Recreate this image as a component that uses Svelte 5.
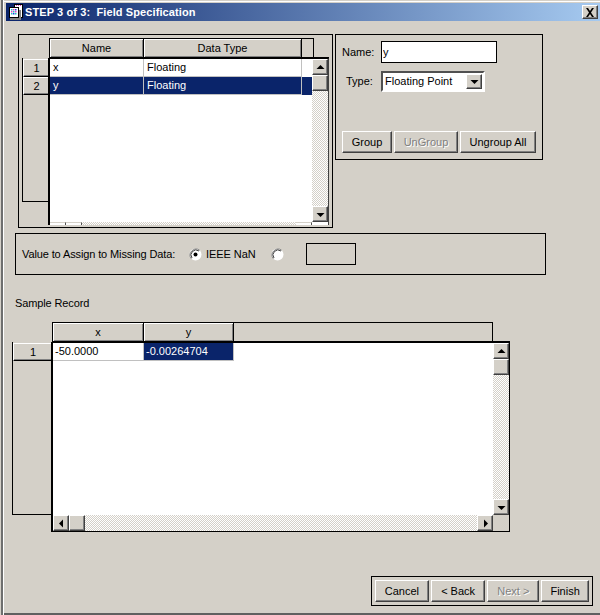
<script>
	const fields = [
		{ id: 1, name: 'x', type: 'Floating', selected: false },
		{ id: 2, name: 'y', type: 'Floating', selected: true }
	];
	const sample = [
		{ value: '-50.0000', selected: false },
		{ value: '-0.00264704', selected: true }
	];
	const iconDots = ['#20c0c0', '#e040c0', '#2040e0', '#e040c0', '#20c0c0', '#e040c0', '#20c0c0', '#2040e0', '#20c0c0'];
</script>

{#snippet arrow(dir)}
	<button class="btn sb-btn" tabindex="-1">
		<svg width="9" height="9" viewBox="0 0 9 9">
			{#if dir === 'up'}<path d="M4.5 2 L8.5 6 H0.5 Z" />{/if}
			{#if dir === 'down'}<path d="M0.5 3 H8.5 L4.5 7 Z" />{/if}
			{#if dir === 'left'}<path d="M6 0.5 V8.5 L2 4.5 Z" />{/if}
			{#if dir === 'right'}<path d="M3 0.5 V8.5 L7 4.5 Z" />{/if}
		</svg>
	</button>
{/snippet}

{#snippet radio(on)}
	<svg class="radio" width="13" height="13" viewBox="0 0 13 13">
		<circle cx="6.5" cy="6.5" r="6" fill="#fff" />
		<path d="M2.3 10.7 A6 6 0 0 1 10.7 2.3" fill="none" stroke="#808080" />
		<path d="M3 10 A5 5 0 0 1 10 3" fill="none" stroke="#404040" />
		{#if on}<circle cx="6.5" cy="6.5" r="2" fill="#000" />{/if}
	</svg>
{/snippet}

<div class="window">
	<div class="titlebar">
		<svg class="app-icon" width="16" height="16" viewBox="0 0 16 16">
			<rect x="6" y="0" width="9" height="14" fill="#000" />
			<rect x="7" y="1" width="7" height="12" fill="#fff" />
			<rect x="8" y="1" width="1" height="1" fill="#e040c0" />
			<rect x="10" y="1" width="1" height="1" fill="#e040c0" />
			<rect x="12" y="1" width="1" height="1" fill="#e040c0" />
			<rect x="2" y="6" width="11" height="10" fill="#808080" />
			<rect x="1" y="3" width="10" height="11" fill="#000" />
			<rect x="2" y="4" width="8" height="9" fill="#fff" />
			{#each iconDots as color, i}
				<rect x={3 + (i % 3) * 2} y={5 + Math.floor(i / 3) * 2} width="1.5" height="1.5" fill={color} />
			{/each}
		</svg>
		<span class="title">STEP 3 of 3:&nbsp; Field Specification</span>
		<button class="btn close" tabindex="-1">
			<svg width="10" height="9" viewBox="0 0 10 9"><path d="M1 0 H3 L5 3 L7 0 H9 L6 4.5 L9 9 H7 L5 6 L3 9 H1 L4 4.5 Z" /></svg>
		</button>
	</div>

	<div class="top-row">
		<div class="group fields-group">
			<div class="sheet sheet-a">
				<div class="colheads">
					<div class="colhead col-name">Name</div>
					<div class="colhead col-type">Data Type</div>
					<div class="colhead-end"></div>
				</div>
				<div class="rowheads">
					{#each fields as f}
						<div class="rowhead">{f.id}</div>
					{/each}
				</div>
				<div class="body">
					<div class="cells">
						{#each fields as f}
							<div class="row" class:selected={f.selected}>
								<div class="cell col-name">{f.name}</div>
								<div class="cell col-type">{f.type}</div>
							</div>
						{/each}
					</div>
					<div class="vscroll">
						{@render arrow('up')}
						<div class="btn thumb"></div>
						<div class="track"></div>
						{@render arrow('down')}
					</div>
					<div class="hsliver">
						<div class="tick"></div>
						<div class="tick"></div>
						<div class="track"></div>
						<div class="tick"></div>
					</div>
				</div>
			</div>
		</div>

		<div class="group spec-group">
			<div class="form-line name-line">
				<label for="field-name">Name:</label>
				<input id="field-name" value="y" />
			</div>
			<div class="form-line type-line">
				<span class="type-label">Type:</span>
				<div class="combo">
					<span class="combo-text">Floating Point</span>
					<button class="btn combo-btn" tabindex="-1">
						<svg width="9" height="9" viewBox="0 0 9 9"><path d="M0.5 3 H8.5 L4.5 7 Z" /></svg>
					</button>
				</div>
			</div>
			<div class="btn-row">
				<button class="btn push w-group">Group</button>
				<button class="btn push w-ungroup disabled">UnGroup</button>
				<button class="btn push w-all">Ungroup All</button>
			</div>
		</div>
	</div>

	<div class="group missing-group">
		<span class="missing-label">Value to Assign to Missing Data:</span>
		{@render radio(true)}
		<span class="nan-label">IEEE NaN</span>
		{@render radio(false)}
		<div class="missing-box"></div>
	</div>

	<div class="sample-label">Sample Record</div>

	<div class="sheet sheet-b">
		<div class="colheads">
			<div class="colhead col-x">x</div>
			<div class="colhead col-y">y</div>
			<div class="colhead-end"></div>
		</div>
		<div class="rowheads">
			<div class="rowhead">1</div>
		</div>
		<div class="body">
			<div class="cells">
				<div class="row">
					{#each sample as s, i}
						<div class="cell {i === 0 ? 'col-x' : 'col-y'}" class:selected={s.selected}>{s.value}</div>
					{/each}
				</div>
			</div>
			<div class="vscroll">
				{@render arrow('up')}
				<div class="btn thumb"></div>
				<div class="track"></div>
				{@render arrow('down')}
			</div>
			<div class="hscroll">
				{@render arrow('left')}
				<div class="btn thumb"></div>
				<div class="track"></div>
				{@render arrow('right')}
			</div>
			<div class="corner"></div>
		</div>
	</div>

	<div class="footer">
		<div class="group nav-group">
			<button class="btn push w-cancel">Cancel</button>
			<button class="btn push w-back">&lt; Back</button>
			<button class="btn push w-next disabled">Next &gt;</button>
			<button class="btn push w-finish">Finish</button>
		</div>
	</div>
</div>

<style>
	:global(body) {
		background: #d4d0c8;
	}

	.window {
		width: 600px;
		height: 615px;
		box-sizing: border-box;
		padding-top: 3px;
		overflow: hidden;
		background: #d4d0c8;
		color: #000;
		font: 11px/13px "Liberation Sans", Arial, sans-serif;
		box-shadow: inset 1px 0 #d4d0c8, inset 3px 0 #6e6e6e, inset 4px 0 #fff, inset 0 1px #d4d0c8, inset 0 2px #fff, inset 0 -2px #606060;
	}

	.titlebar {
		display: flex;
		align-items: center;
		height: 18px;
		margin-left: 6px;
		padding: 0 2px;
		background: linear-gradient(90deg, #0a246a, #a6caf0);
		color: #fff;
	}

	.app-icon {
		flex: none;
	}

	.title {
		margin-left: 1px;
		font-weight: bold;
		font-size: 11px;
		letter-spacing: 0.1px;
		white-space: nowrap;
	}

	.btn {
		box-sizing: border-box;
		display: flex;
		align-items: center;
		justify-content: center;
		padding: 0;
		background: #d4d0c8;
		border: 1px solid;
		border-color: #fff #404040 #404040 #fff;
		box-shadow: inset -1px -1px #808080;
		border-radius: 0;
		font: inherit;
		color: #000;
	}

	.close {
		width: 16px;
		height: 14px;
		margin-left: auto;
	}

	.top-row {
		display: flex;
		align-items: flex-start;
		gap: 2px;
		margin: 13px 0 0 18px;
	}

	.group {
		box-sizing: border-box;
		border: 1px solid #000;
	}

	.fields-group {
		width: 315px;
		height: 194px;
		padding: 3px 0 0 3px;
	}

	.spec-group {
		width: 208px;
		height: 126px;
		padding: 6px 0 0 6px;
	}

	.form-line {
		display: flex;
		align-items: center;
	}

	.name-line {
		height: 22px;
	}

	.name-line label {
		width: 39px;
	}

	.name-line input {
		box-sizing: border-box;
		width: 116px;
		height: 22px;
		padding: 0 1px;
		border: 1px solid #000;
		border-radius: 0;
		outline: none;
		background: #fff;
		font: inherit;
	}

	.type-line {
		height: 21px;
		margin-top: 8px;
	}

	.type-label {
		width: 35px;
		margin-left: 4px;
	}

	.combo {
		box-sizing: border-box;
		display: flex;
		align-items: center;
		justify-content: space-between;
		width: 104px;
		height: 21px;
		padding-left: 2px;
		padding-right: 1px;
		background: #fff;
		border: 2px solid;
		border-color: #505050 #fff #fff #505050;
	}

	.combo-btn {
		width: 16px;
		height: 15px;
	}

	.btn-row {
		display: flex;
		gap: 2px;
		margin-top: 39px;
	}

	.push {
		height: 22px;
		white-space: nowrap;
	}

	.w-group { width: 50px; }
	.w-ungroup { width: 64px; }
	.w-all { width: 76px; }
	.w-cancel { width: 54px; }
	.w-back { width: 55px; }
	.w-next { width: 52px; }
	.w-finish { width: 48px; }

	.disabled {
		color: #808080;
		text-shadow: 1px 1px #fff;
	}

	.missing-group {
		display: flex;
		align-items: center;
		width: 531px;
		height: 42px;
		margin: 5px 0 0 15px;
		padding-left: 6px;
	}

	.missing-label {
		width: 167px;
		letter-spacing: -0.12px;
	}

	.nan-label {
		width: 65px;
		margin-left: 4px;
		letter-spacing: -0.05px;
	}

	.radio {
		flex: none;
	}

	.missing-box {
		box-sizing: border-box;
		width: 50px;
		height: 22px;
		margin-left: 22px;
		border: 1px solid #000;
	}

	.sample-label {
		margin: 22px 0 0 15px;
		height: 13px;
		letter-spacing: -0.12px;
	}

	/* spreadsheet controls */
	.sheet {
		display: grid;
	}

	.sheet-a {
		grid-template-columns: 27px 280px;
		grid-template-rows: 20px 167px;
	}

	.sheet-b {
		grid-template-columns: 40px 458px;
		grid-template-rows: 20px 190px;
		margin: 12px 0 0 12px;
	}

	.colheads {
		grid-column: 2;
		display: flex;
		border-bottom: 1px solid #000;
	}

	.colhead,
	.colhead-end {
		box-sizing: border-box;
		border: 1px solid #000;
		border-bottom: 0;
		border-right: 0;
	}

	.colhead {
		display: flex;
		align-items: center;
		justify-content: center;
		box-shadow: inset 1px 1px #fff, inset -1px -1px #808080;
	}

	.colhead-end {
		border-right: 1px solid #000;
	}

	.col-name { width: 94px; flex: none; }
	.col-type { width: 158px; flex: none; }
	.sheet-a .colhead-end { width: 13px; }

	.col-x { width: 91px; flex: none; }
	.col-y { width: 90px; flex: none; }
	.sheet-b .colhead-end { width: 260px; }

	.rowheads {
		box-sizing: border-box;
		grid-column: 1;
		padding-top: 1px;
		border: 1px solid #000;
		border-top: 0;
		border-right: 0;
	}

	.sheet-a .rowheads { height: 144px; }
	.sheet-b .rowheads { height: 173px; }

	.rowhead {
		box-sizing: border-box;
		display: flex;
		align-items: center;
		justify-content: center;
		height: 18px;
		border-top: 1px solid #fff;
		border-left: 1px solid #fff;
		border-bottom: 1px solid #000;
		box-shadow: inset -1px -1px #808080;
	}

	.body {
		display: grid;
		grid-column: 2;
		box-sizing: border-box;
		margin-left: -1px;
		background: #fff;
		border-left: 2px solid #000;
		border-top: 1px solid #000;
		grid-template-columns: 1fr 16px;
	}

	.sheet-a .body {
		grid-template-rows: 1fr 3px;
		width: 281px;
		border-right: 1px solid #404040;
	}

	.sheet-b .body {
		grid-template-rows: 1fr 16px;
		width: 459px;
		border-right: 1px solid #000;
		border-bottom: 1px solid #000;
	}

	.cells {
		min-width: 0;
	}

	.row {
		display: flex;
		height: 18px;
	}

	.row.selected,
	.cell.selected {
		background: #0a246a;
		color: #fff;
	}

	.cell {
		box-sizing: border-box;
		padding-left: 3px;
		line-height: 17px;
		border-right: 1px solid #c0c0c0;
		border-bottom: 1px solid #c0c0c0;
	}

	.sheet-b .cell {
		padding-left: 2px;
	}

	.vscroll {
		display: flex;
		flex-direction: column;
		grid-column: 2;
		grid-row: 1;
	}

	.hscroll,
	.hsliver {
		display: flex;
		grid-column: 1;
		grid-row: 2;
	}

	.sb-btn,
	.thumb {
		flex: none;
		width: 16px;
		height: 16px;
	}

	.sb-btn svg {
		display: block;
	}

	.track {
		flex: 1;
		background: repeating-conic-gradient(#d4d0c8 0 25%, #fff 0 50%) 0 0 / 2px 2px;
	}

	.tick {
		box-sizing: border-box;
		flex: none;
		width: 16px;
		border-top: 1px solid #d4d0c8;
		border-right: 1px solid #505050;
		background: #fff;
	}

	.corner {
		background: #d4d0c8;
	}

	.footer {
		display: flex;
		justify-content: flex-end;
		margin: 44px 7px 0 0;
	}

	.nav-group {
		display: flex;
		gap: 2px;
		width: 222px;
		height: 30px;
		padding: 3px 3px;
	}
</style>
